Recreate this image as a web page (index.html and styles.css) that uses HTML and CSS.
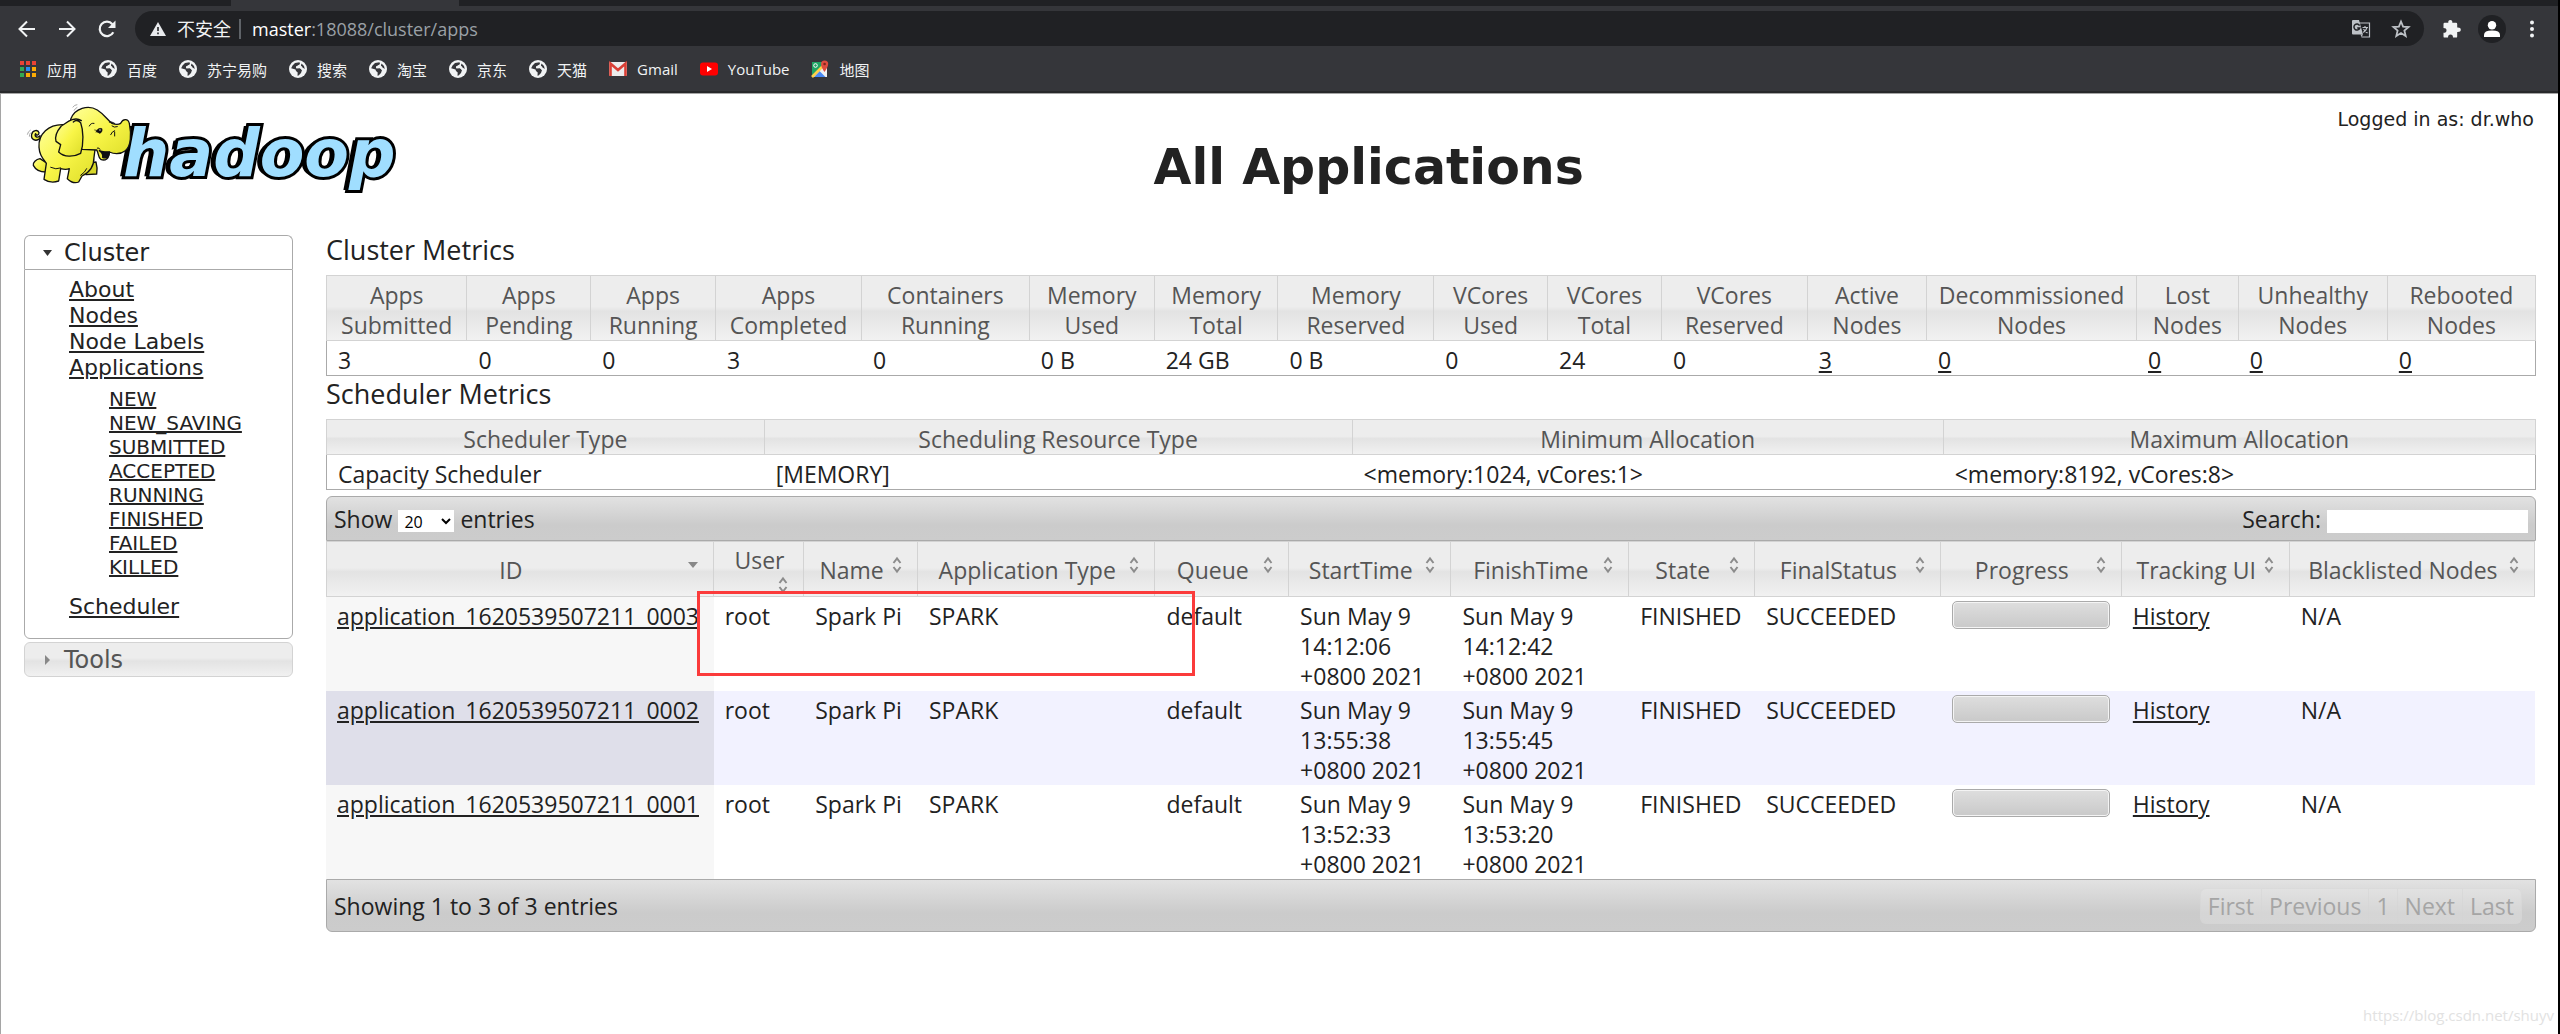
FILE: index.html
```
<!doctype html>
<html lang="en">

<head>
  <meta charset="utf-8">
  <title>All Applications</title>
  <meta name="viewport" content="width=device-width, initial-scale=1">
  <link rel="stylesheet" href="styles.css">
</head>

<body>

  <!-- shared icons -->
  <svg class="defs" width="0" height="0">
    <symbol id="globe" viewBox="0 0 18 18">
      <circle cx="9" cy="9" r="9" fill="#f1f3f4"/>
      <path d="M6 3 L10.5 2.2 L11 4 L9 5.5 L7 6.5 L7 8 L11 8 L13 10 L12 13 L9.5 15.5 L8.5 15.8 L8.7 12.5 L7 11 L6.5 9.5 L2.2 8.2 L3.5 5.4 Z" fill="#35363a"/>
      <path d="M7.2 6.8 L9.5 5.2 L11.8 5.4 L12 7.2 L14.5 8 L15.5 10.5 L13 10 L11 8.2 L7.3 8.4 Z" fill="#f1f3f4"/>
      <path d="M12.5 3.5 L15 6 L15.8 9 L13.6 7.6 L12 5.2 Z" fill="#35363a"/>
    </symbol>
    <symbol id="sort" viewBox="0 0 20 20">
      <path d="M6.5 8 L10 3.5 L13.5 8 M6.5 12 L10 16.5 L13.5 12" fill="none" stroke="#8c8c8c" stroke-width="2"/>
    </symbol>
    <symbol id="sort-desc" viewBox="0 0 20 20">
      <path d="M5 7 H15 L10 13 Z" fill="#888"/>
    </symbol>
  </svg>

  <div class="browser">
    <div class="tabstrip"><div class="tab"></div></div>
    <div class="toolbar">
      <div class="nav">
        <button aria-label="Back"><svg width="20" height="20" viewBox="0 0 20 20"><path d="M18 10 H3 M10 2.5 L2.5 10 L10 17.5" fill="none" stroke="#f1f3f4" stroke-width="2"/></svg></button>
        <button aria-label="Forward"><svg width="20" height="20" viewBox="0 0 20 20"><path d="M2 10 H17 M10 2.5 L17.5 10 L10 17.5" fill="none" stroke="#f1f3f4" stroke-width="2"/></svg></button>
        <button aria-label="Reload"><svg width="20" height="20" viewBox="0 0 20 20"><path d="M16.3 13.2 A7.2 7.2 0 1 1 15.4 5.2" fill="none" stroke="#f1f3f4" stroke-width="2.2"/><path d="M18.5 1.5 V9 H11 Z" fill="#f1f3f4"/></svg></button>
      </div>
      <div class="omnibox">
        <svg width="16" height="16" viewBox="0 0 16 16"><path d="M8 1 L16 15 H0 Z" fill="#e8eaed"/><path d="M8 6 V10 M8 11.5 V13.2" stroke="#202124" stroke-width="1.6"/></svg>
        <span class="insecure">不安全</span>
        <span class="url"><b>master</b>:18088/cluster/apps</span>
        <button class="translate" aria-label="Translate"><svg width="20" height="20" viewBox="0 0 20 20"><path d="M7 4 H18.5 V18 H10.5" fill="none" stroke="#bdc1c6" stroke-width="1.2"/><path d="M2 1 H8 L12 15.5 H2 Q1 15.5 1 14.5 V2 Q1 1 2 1 Z" fill="#bdc1c6"/><path d="M8.6 6.6 A3 3 0 1 0 8.8 9 H6.2" fill="none" stroke="#202124" stroke-width="1.5"/><path d="M11.5 8.5 H17 M14 7 V8.5 M16 8.5 Q15 12 12.2 13.5 M12.5 10 Q14 12.5 16.5 14" fill="none" stroke="#bdc1c6" stroke-width="1.2"/><path d="M9.5 15.5 H12 L10.5 18 Z" fill="#bdc1c6"/></svg></button>
        <button aria-label="Bookmark"><svg width="20" height="20" viewBox="0 0 20 20"><path d="M10 2.5 L12.1 7.6 L17.6 8 L13.4 11.6 L14.7 17 L10 14.1 L5.3 17 L6.6 11.6 L2.4 8 L7.9 7.6 Z" fill="none" stroke="#bdc1c6" stroke-width="1.8"/></svg></button>
      </div>
      <div class="actions">
        <button aria-label="Extensions"><svg width="20" height="20" viewBox="0 0 20 20"><path d="M1.5 5 Q1.5 3.8 2.7 3.8 H6.3 Q6 1 8.3 1 Q10.6 1 10.3 3.8 H14 Q15.2 3.8 15.2 5 V8.6 Q18.8 8.4 18.8 10.8 Q18.8 13.2 15.2 13 V17.4 Q15.2 18.6 14 18.6 H11 Q11 15.4 8.5 15.4 Q6 15.4 6 18.6 H2.7 Q1.5 18.6 1.5 17.4 V13.8 Q4.5 13.8 4.5 11.4 Q4.5 9 1.5 9 Z" fill="#f1f3f4"/></svg></button>
        <button class="profile" aria-label="Profile"><svg width="28" height="28" viewBox="0 0 28 28"><circle cx="14" cy="14" r="14" fill="#202124"/><circle cx="14" cy="10.2" r="4.2" fill="#fff"/><path d="M6 22 V20 Q6 15.6 14 15.6 Q22 15.6 22 20 V22 Z" fill="#fff"/></svg></button>
        <button aria-label="Menu"><svg width="20" height="20" viewBox="0 0 20 20"><g fill="#f1f3f4"><circle cx="10" cy="3.5" r="2"/><circle cx="10" cy="10" r="2"/><circle cx="10" cy="16.5" r="2"/></g></svg></button>
      </div>
    </div>
    <div class="bookmarks">
      <a href="#"><svg width="18" height="18" viewBox="0 0 18 18"><path d="M1 1h4v4H1zM7 1h4v4H7zM13 1h4v4h-4z" fill="#ea4335"/><path d="M1 7h4v4H1zM1 13h4v4H1z" fill="#34a853"/><path d="M7 7h4v4H7z" fill="#2a8cf4"/><path d="M13 7h4v4h-4zM7 13h4v4H7zM13 13h4v4h-4z" fill="#fbab05"/></svg>应用</a>
      <a href="#"><svg width="18" height="18"><use href="#globe"/></svg>百度</a>
      <a href="#"><svg width="18" height="18"><use href="#globe"/></svg>苏宁易购</a>
      <a href="#"><svg width="18" height="18"><use href="#globe"/></svg>搜索</a>
      <a href="#"><svg width="18" height="18"><use href="#globe"/></svg>淘宝</a>
      <a href="#"><svg width="18" height="18"><use href="#globe"/></svg>京东</a>
      <a href="#"><svg width="18" height="18"><use href="#globe"/></svg>天猫</a>
      <a href="#"><svg width="18" height="18" viewBox="0 0 18 18"><rect y="2" width="18" height="14" rx="1" fill="#ececec"/><path d="M1.5 16 V3.5 L9 10 L16.5 3.5 V16" fill="none" stroke="#d93f35" stroke-width="2.6"/></svg>Gmail</a>
      <a href="#"><svg width="18" height="18" viewBox="0 0 18 18"><rect y="2.5" width="18" height="13" rx="3" fill="#f00"/><path d="M7 6 L12 9 L7 12 Z" fill="#fff"/></svg>YouTube</a>
      <a href="#"><svg width="18" height="18" viewBox="0 0 18 18"><path d="M1 2 H16 V17 H1 Z" fill="#f1f1f1"/><path d="M1 2 H11 V7 L1 17 Z" fill="#1fa463"/><path d="M3 17 L8.5 11 L14.5 17 Z" fill="#4a89f3"/><path d="M1 17 L12 6" stroke="#ffd04b" stroke-width="2.6"/><circle cx="4.5" cy="5.5" r="1.8" fill="none" stroke="#fff"/><path d="M13.5 12 Q10 7 10 4 A3.6 3.6 0 0 1 17.2 4 Q17 7 13.5 12 Z" fill="#dd4b3e"/><circle cx="13.6" cy="4" r="1.3" fill="#7d271d"/></svg>地图</a>
    </div>
  </div>

  <div class="page">
    <div class="header">
      <a class="logo" href="#">
        <svg class="elephant" width="120" height="90" viewBox="0 0 360 270">
          <defs>
            <linearGradient id="skin" x1="0" y1="0" x2="1" y2="1"><stop offset="0" stop-color="#ffff9a"/><stop offset=".5" stop-color="#f8f547"/><stop offset="1" stop-color="#dcdc28"/></linearGradient>
          </defs>
          <g stroke="#111" stroke-width="4" stroke-linejoin="round" stroke-linecap="round" fill="url(#skin)">
            <path d="M60 116 C46 126 32 118 35 103 C38 90 54 88 57 98 C57 106 48 108 47 101 C42 108 50 116 60 107 Z"/>
            <path d="M60 176 C48 178 38 188 40 196 C46 208 60 216 78 216 L82 190 Z"/>
            <path d="M205 190 L228 186 C232 200 232 212 230 222 L198 224 Z" fill="#d6d62a"/>
            <path d="M135 74 C85 70 54 104 57 142 C58 162 66 172 79 190 L72 238 C84 246 102 248 116 243 L122 206 Q138 210 148 206 L142 236 C152 246 166 250 176 246 L186 228 C204 220 222 204 222 172 L230 110 Z"/>
            <path d="M152 58 C164 24 205 14 232 30 C254 44 262 60 276 70 Q292 76 302 70 C308 56 324 54 328 70 C334 100 334 138 316 152 C300 164 282 162 268 156 C268 176 256 184 242 178 C234 172 236 158 230 150 L186 148 L150 100 Z"/>
            <path d="M184 62 C160 46 134 74 124 78 C112 92 104 110 108 124 L122 134 L116 156 C132 172 160 172 182 160 C192 130 190 90 182 68 C174 60 166 60 160 66"/>
            <path d="M238 152 C248 158 258 154 268 156 C268 168 262 178 248 172 C250 162 244 156 238 152 Z" fill="#111"/>
            <path d="M232 144 Q238 142 240 148 M208 78 Q212 68 222 70 M276 78 Q282 84 292 80 M272 104 Q276 94 284 92 M284 108 V96 M268 66 Q276 64 284 70" fill="none" stroke-width="3"/>
            <path d="M228 96 Q234 82 246 86 Q248 98 238 100 M224 90 L234 92" stroke-width="2" fill="#111"/>
            <circle cx="240" cy="90" r="2" fill="#fff" stroke="none"/>
            <path d="M92 202 Q108 210 122 204 M182 226 Q196 216 200 206" fill="none" stroke-width="3"/>
          </g>
          <path d="M158 22 Q164 14 172 14 M162 32 Q166 24 172 22 M22 104 Q24 94 32 90 M28 110 Q28 102 32 98" fill="none" stroke="#aaa" stroke-width="3"/>
        </svg>
        <span class="wordmark">hadoop</span>
      </a>
      <h1>All Applications</h1>
      <div class="user">Logged in as: dr.who</div>
    </div>

    <div class="layout">
      <div class="sidebar">
        <h3 class="open"><svg width="12" height="12" viewBox="0 0 12 12"><path d="M2 3 H11 L6.500 9 Z" fill="#333"/></svg>Cluster</h3>
        <div class="menu">
          <ul>
            <li><a href="#">About</a></li>
            <li><a href="#">Nodes</a></li>
            <li><a href="#">Node Labels</a></li>
            <li><a href="#">Applications</a>
              <ul>
                <li><a href="#">NEW</a></li>
                <li><a href="#">NEW_SAVING</a></li>
                <li><a href="#">SUBMITTED</a></li>
                <li><a href="#">ACCEPTED</a></li>
                <li><a href="#">RUNNING</a></li>
                <li><a href="#">FINISHED</a></li>
                <li><a href="#">FAILED</a></li>
                <li><a href="#">KILLED</a></li>
              </ul>
            </li>
            <li><a href="#">Scheduler</a></li>
          </ul>
        </div>
        <h3 class="closed"><svg width="12" height="12" viewBox="0 0 12 12"><path d="M4 1 V11 L9 6 Z" fill="#888"/></svg>Tools</h3>
      </div>

      <div class="content">
        <h2>Cluster Metrics</h2>
        <table class="metrics cluster">
          <thead>
            <tr>
              <th>Apps Submitted</th>
              <th>Apps Pending</th>
              <th>Apps Running</th>
              <th>Apps Completed</th>
              <th>Containers Running</th>
              <th>Memory Used</th>
              <th>Memory Total</th>
              <th>Memory Reserved</th>
              <th>VCores Used</th>
              <th>VCores Total</th>
              <th>VCores Reserved</th>
              <th>Active Nodes</th>
              <th>Decommissioned Nodes</th>
              <th>Lost Nodes</th>
              <th>Unhealthy Nodes</th>
              <th>Rebooted Nodes</th>
            </tr>
          </thead>
          <tbody>
            <tr>
              <td>3</td>
              <td>0</td>
              <td>0</td>
              <td>3</td>
              <td>0</td>
              <td>0 B</td>
              <td>24 GB</td>
              <td>0 B</td>
              <td>0</td>
              <td>24</td>
              <td>0</td>
              <td><a href="#">3</a></td>
              <td><a href="#">0</a></td>
              <td><a href="#">0</a></td>
              <td><a href="#">0</a></td>
              <td><a href="#">0</a></td>
            </tr>
          </tbody>
        </table>

        <h2>Scheduler Metrics</h2>
        <table class="metrics scheduler">
          <thead>
            <tr>
              <th>Scheduler Type</th>
              <th>Scheduling Resource Type</th>
              <th>Minimum Allocation</th>
              <th>Maximum Allocation</th>
            </tr>
          </thead>
          <tbody>
            <tr>
              <td>Capacity Scheduler</td>
              <td>[MEMORY]</td>
              <td>&lt;memory:1024, vCores:1&gt;</td>
              <td>&lt;memory:8192, vCores:8&gt;</td>
            </tr>
          </tbody>
        </table>

        <div class="apps-wrapper">
          <div class="bar bar-top">
            <label>Show <select>
              <option>20</option>
              <option>40</option>
              <option>60</option>
              <option>80</option>
              <option>100</option>
            </select> entries</label>
            <label>Search: <input type="text"></label>
          </div>
          <table class="apps">
            <thead>
              <tr>
                <th><div class="sort"><span>ID</span><svg width="20" height="20"><use href="#sort-desc"/></svg></div></th>
                <th><div class="sort stacked"><span>User</span><svg width="20" height="20"><use href="#sort"/></svg></div></th>
                <th><div class="sort"><span>Name</span><svg width="20" height="20"><use href="#sort"/></svg></div></th>
                <th><div class="sort"><span>Application Type</span><svg width="20" height="20"><use href="#sort"/></svg></div></th>
                <th><div class="sort"><span>Queue</span><svg width="20" height="20"><use href="#sort"/></svg></div></th>
                <th><div class="sort"><span>StartTime</span><svg width="20" height="20"><use href="#sort"/></svg></div></th>
                <th><div class="sort"><span>FinishTime</span><svg width="20" height="20"><use href="#sort"/></svg></div></th>
                <th><div class="sort"><span>State</span><svg width="20" height="20"><use href="#sort"/></svg></div></th>
                <th><div class="sort"><span>FinalStatus</span><svg width="20" height="20"><use href="#sort"/></svg></div></th>
                <th><div class="sort"><span>Progress</span><svg width="20" height="20"><use href="#sort"/></svg></div></th>
                <th><div class="sort"><span>Tracking UI</span><svg width="20" height="20"><use href="#sort"/></svg></div></th>
                <th><div class="sort"><span>Blacklisted Nodes</span><svg width="20" height="20"><use href="#sort"/></svg></div></th>
              </tr>
            </thead>
            <tbody>
              <tr>
                <td><a href="#">application_1620539507211_0003</a></td>
                <td>root</td>
                <td>Spark Pi</td>
                <td>SPARK</td>
                <td>default</td>
                <td>Sun May 9<br>14:12:06<br>+0800 2021</td>
                <td>Sun May 9<br>14:12:42<br>+0800 2021</td>
                <td>FINISHED</td>
                <td>SUCCEEDED</td>
                <td><div class="progress"></div></td>
                <td><a href="#">History</a></td>
                <td>N/A</td>
              </tr>
              <tr>
                <td><a href="#">application_1620539507211_0002</a></td>
                <td>root</td>
                <td>Spark Pi</td>
                <td>SPARK</td>
                <td>default</td>
                <td>Sun May 9<br>13:55:38<br>+0800 2021</td>
                <td>Sun May 9<br>13:55:45<br>+0800 2021</td>
                <td>FINISHED</td>
                <td>SUCCEEDED</td>
                <td><div class="progress"></div></td>
                <td><a href="#">History</a></td>
                <td>N/A</td>
              </tr>
              <tr>
                <td><a href="#">application_1620539507211_0001</a></td>
                <td>root</td>
                <td>Spark Pi</td>
                <td>SPARK</td>
                <td>default</td>
                <td>Sun May 9<br>13:52:33<br>+0800 2021</td>
                <td>Sun May 9<br>13:53:20<br>+0800 2021</td>
                <td>FINISHED</td>
                <td>SUCCEEDED</td>
                <td><div class="progress"></div></td>
                <td><a href="#">History</a></td>
                <td>N/A</td>
              </tr>
            </tbody>
          </table>
          <div class="bar bar-bottom">
            <span>Showing 1 to 3 of 3 entries</span>
            <div class="pager">
              <button disabled>First</button>
              <button disabled>Previous</button>
              <button disabled>1</button>
              <button disabled>Next</button>
              <button disabled>Last</button>
            </div>
          </div>
          <div class="highlight"></div>
        </div>
      </div>
    </div>
    <div class="watermark">https://blog.csdn.net/shuyv</div>
  </div>

</body>

</html>
```
FILE: styles.css
```
* {
    box-sizing: border-box;
}
body {
    margin: 0;
    min-height: 100vh;
    display: flex;
    flex-direction: column;
    border-right: 2px solid #000;
    background: #fff;
    color: #222;
    font-family: "Open Sans", "Noto Sans CJK SC", sans-serif;
}
.defs {
    position: absolute;
}
button {
    border: 0;
    padding: 0;
    background: none;
    font: inherit;
    color: inherit;
}
svg {
    display: block;
    flex: none;
}
a {
    color: inherit;
}

/* browser chrome */
.browser {
    background: #35363a;
    border-bottom: 2px solid #27282a;
    color: #f1f3f4;
}
.tabstrip {
    height: 6px;
    background: #202124;
    padding-left: 231px;
}
.tab {
    width: 228px;
    height: 6px;
    background: #35363a;
}
.toolbar {
    display: flex;
    align-items: center;
    padding: 5px 0 1px 17px;
}
.nav {
    display: flex;
    gap: 20px;
    margin-right: 18px;
}
.omnibox {
    flex: 1;
    display: flex;
    align-items: center;
    height: 35px;
    padding: 0 13px 0 15px;
    border-radius: 18px;
    background: #202124;
    font-size: 18px;
}
.insecure {
    margin: 0 8px 0 11px;
    line-height: 20px;
}
.url {
    flex: 1;
    padding-left: 11px;
    border-left: 2px solid #5f6368;
    line-height: 20px;
    color: #9aa0a6;
}
.url b {
    font-weight: normal;
    color: #fff;
}
.translate {
    margin-right: 20px;
}
.actions {
    display: flex;
    align-items: center;
    gap: 16px;
    margin: 0 16px 0 18px;
}
.bookmarks {
    display: flex;
    align-items: center;
    gap: 22px;
    height: 44px;
    padding-left: 19px;
    font-size: 15px;
}
.bookmarks a {
    display: flex;
    align-items: center;
    gap: 10px;
    text-decoration: none;
}

/* page */
.page {
    flex: 1;
    position: relative;
    border-top: 1px solid #a5a5a5;
    border-left: 1px solid #a5a5a5;
}
.header {
    display: flex;
    align-items: flex-start;
    padding: 6px 24px 0 19px;
    font-family: "DejaVu Sans", sans-serif;
}
.logo {
    display: flex;
    align-items: flex-start;
    width: 380px;
    height: 132px;
    text-decoration: none;
}
.elephant {
    position: relative;
    z-index: 1;
}
/* the word tucks in behind the trunk */
.wordmark {
    margin: 16px 0 0 -17px;
    font-size: 65px;
    line-height: 76px;
    font-weight: bold;
    font-style: italic;
    color: #a0deff;
    -webkit-text-stroke: 6px #000;
    paint-order: stroke fill;
    text-shadow: -5px 0 0 #000;
}
.header h1 {
    flex: 1;
    margin: 39px 0 0;
    font-size: 49px;
    line-height: 58px;
    text-align: center;
}
.user {
    margin-top: 7px;
    font-size: 19px;
    line-height: 24px;
}
.layout {
    display: flex;
    align-items: flex-start;
    gap: 33px;
    padding: 0 22px 0 23px;
}

/* sidebar */
.sidebar {
    flex: none;
    width: 269px;
    margin-top: 3px;
    font-family: "DejaVu Sans", sans-serif;
}
.sidebar h3 {
    display: flex;
    align-items: center;
    gap: 11px;
    margin: 0;
    padding: 1px 0 0 16px;
    font-size: 24px;
    line-height: 32px;
    font-weight: normal;
    border: 1px solid #aaa;
}
.sidebar .open {
    border-bottom: 0;
    border-radius: 6px 6px 0 0;
}
.sidebar .closed {
    margin-top: 3px;
    color: #555;
    border-color: #d3d3d3;
    border-radius: 6px;
    background: linear-gradient(#ededed, #ededed 45%, #e3e3e3 55%, #f1f1f1);
}
.menu {
    padding: 7px 0 18px 44px;
    border: 1px solid #aaa;
    border-radius: 0 0 6px 6px;
    font-size: 22px;
    line-height: 26px;
}
.menu ul {
    margin: 0;
    padding: 0;
    list-style: none;
}
.menu ul ul {
    margin: 6px 0 15px;
    padding-left: 40px;
    font-size: 20px;
    line-height: 24px;
}

/* tables */
.content {
    flex: 1;
    min-width: 0;
    font-size: 23px;
    line-height: 30px;
}
.content h2 {
    margin: 0 0 7px;
    font-size: 27px;
    line-height: 36px;
    font-weight: normal;
}
table {
    width: 100%;
    table-layout: fixed;
    border-collapse: separate;
    border-spacing: 0;
}
th {
    border: 1px solid #d3d3d3;
    border-left-width: 0;
    background: linear-gradient(#ededed, #ededed 48%, #e3e3e3 55%, #f1f1f1);
    color: #555;
    font-weight: normal;
}
th:first-child {
    border-left-width: 1px;
}
td {
    padding: 4px 0 0 11px;
    vertical-align: top;
    white-space: nowrap;
}
.metrics th {
    padding: 4px 10px 0;
}
.metrics td {
    border-bottom: 1px solid #aaa;
}
.metrics td:first-child {
    border-left: 1px solid #aaa;
}
.metrics td:last-child {
    border-right: 1px solid #aaa;
}

.cluster th:nth-child(1) { width: 6.4%; }
.cluster th:nth-child(2) { width: 5.6%; }
.cluster th:nth-child(3) { width: 5.65%; }
.cluster th:nth-child(4) { width: 6.6%; }
.cluster th:nth-child(5) { width: 7.6%; }
.cluster th:nth-child(6) { width: 5.65%; }
.cluster th:nth-child(7) { width: 5.6%; }
.cluster th:nth-child(8) { width: 7.05%; }
.cluster th:nth-child(9) { width: 5.15%; }
.cluster th:nth-child(10) { width: 5.15%; }
.cluster th:nth-child(11) { width: 6.6%; }
.cluster th:nth-child(12) { width: 5.4%; }
.cluster th:nth-child(13) { width: 9.5%; }
.cluster th:nth-child(14) { width: 4.6%; }
.cluster th:nth-child(15) { width: 6.75%; }

.scheduler th:nth-child(1) { width: 19.85%; }
.scheduler th:nth-child(2) { width: 26.6%; }
.scheduler th:nth-child(3) { width: 26.75%; }

.apps th:nth-child(1) { width: 17.55%; }
.apps th:nth-child(2) { width: 4.1%; }
.apps th:nth-child(3) { width: 5.15%; }
.apps th:nth-child(4) { width: 10.75%; }
.apps th:nth-child(5) { width: 6.05%; }
.apps th:nth-child(6) { width: 7.35%; }
.apps th:nth-child(7) { width: 8.05%; }
.apps th:nth-child(8) { width: 5.7%; }
.apps th:nth-child(9) { width: 8.4%; }
.apps th:nth-child(10) { width: 8.2%; }
.apps th:nth-child(11) { width: 7.6%; }

.apps-wrapper {
    position: relative;
    margin-top: 6px;
}
.bar {
    display: flex;
    align-items: center;
    justify-content: space-between;
    border: 1px solid #aaa;
    background: linear-gradient(#e2e2e2, #cbcbcb 65%, #cccccc);
}
.bar-top {
    padding: 7px 7px 6px;
    border-radius: 6px 6px 0 0;
}
.bar-top label {
    display: flex;
    align-items: center;
    gap: 6px;
}
.bar-bottom {
    padding: 8px 13px 7px 7px;
    border-radius: 0 0 6px 6px;
}
select {
    width: 56px;
    height: 22px;
    margin: 4px 0 0;
    padding: 0 0 0 2px;
    border: 0;
    background: #fff;
    color: #000;
    font: 16px "Open Sans", sans-serif;
}
.bar input {
    width: 201px;
    height: 23px;
    margin: 4px 0 0;
    border: 0;
    padding: 0 4px;
    background: #fff;
    font: 16px "Open Sans", sans-serif;
}
.apps {
    padding-right: 1px;
}
.apps th {
    height: 56px;
    padding: 2px 10px 0 12px;
}
.sort {
    display: flex;
    align-items: flex-start;
}
.sort span {
    flex: 1;
    white-space: nowrap;
}
.stacked {
    flex-direction: column;
}
.stacked span {
    align-self: center;
}
.stacked svg {
    align-self: flex-end;
}
.apps tbody tr:nth-child(even) {
    background: #f2f2ff;
}
.apps td:first-child {
    background: #f7f7f7;
}
.apps tr:nth-child(even) td:first-child {
    background: #dfdfea;
}
.progress {
    height: 28px;
    margin-right: 12px;
    border: 1px solid #aaa;
    border-radius: 5px;
    box-shadow: inset 0 0 0 1px #f4f4f4;
    background: linear-gradient(#dedede, #c9c9c9);
}
.pager {
    display: flex;
}
.pager button {
    height: 36px;
    padding: 0 7px;
    border: 1px solid rgba(211, 211, 211, 0.5);
    border-left-width: 0;
    background: rgba(237, 237, 237, 0.3);
    color: #a5a5a5;
}
.pager button:first-child {
    border-left-width: 1px;
    border-radius: 6px 0 0 6px;
}
.pager button:last-child {
    border-radius: 0 6px 6px 0;
}
.highlight {
    position: absolute;
    left: 16.8%;
    top: 95px;
    width: 22.5%;
    height: 85px;
    border: 3px solid #fb3b3b;
}
.watermark {
    position: absolute;
    right: 4px;
    bottom: 7px;
    font-size: 15px;
    line-height: 24px;
    color: #e2e2e2;
}
```
